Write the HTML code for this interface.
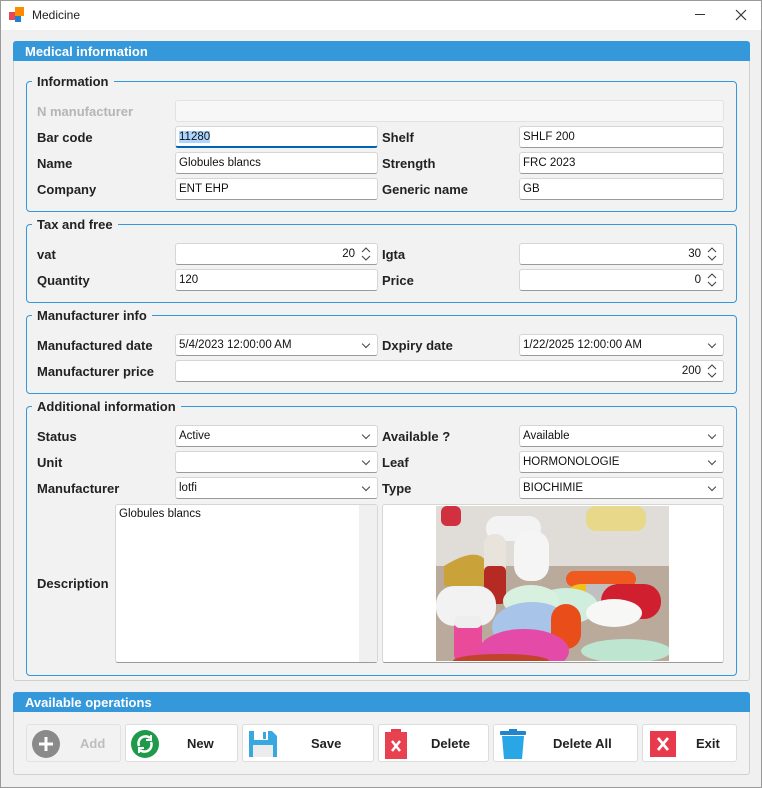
<!DOCTYPE html>
<html><head><meta charset="utf-8"><style>
*{box-sizing:border-box;margin:0;padding:0}
body{width:762px;height:788px;background:#f0f0f0;font-family:"Liberation Sans",sans-serif;position:relative;overflow:hidden}
.a{position:absolute}
.win{left:0;top:0;width:762px;height:788px;border:1px solid #9a9a9a}
.title{left:1px;top:1px;width:760px;height:29px;background:#fff}
.panel{background:#f2f2f2;border:1px solid #d0d0d0;border-radius:3px}
.hdr{background:#3498db;color:#fff;font-weight:bold;font-size:13px;padding:3px 0 0 12px;height:20px;border-radius:3px 3px 0 0}
.grp{border:1px solid #3498db;border-radius:4px}
.leg{background:#f2f2f2;font-weight:bold;font-size:13px;color:#222;padding:0 5px;top:-8px;left:5px;line-height:15px}
.lbl{font-weight:bold;font-size:13px;color:#222;line-height:24px}
.in{background:#fff;border:1px solid #d6d6d6;border-bottom:1px solid #9a9a9a;border-radius:3px;height:22px;font-size:11.5px;line-height:21px;padding-left:3px;color:#111}
.dd::after{content:"";position:absolute;right:8px;top:6px;width:5px;height:5px;border-right:1.2px solid #444;border-bottom:1.2px solid #444;transform:rotate(45deg)}
.btn{background:#fff;border:1px solid #ddd;border-radius:3px;height:38px;top:724px;font-weight:bold;font-size:13px;color:#222;line-height:38px}
</style></head><body>
<div class="a win"></div>
<div class="a title"></div>
<div class="a" style="left:9px;top:12px;width:6px;height:8px;background:#e84855"></div>
<div class="a" style="left:15px;top:7px;width:9px;height:9px;background:#ff8c00"></div>
<div class="a" style="left:15px;top:16px;width:6px;height:6px;background:#1e7fd8"></div>
<div class="a" style="left:32px;top:8px;font-size:12px;color:#222">Medicine</div>
<div class="a" style="left:695px;top:14px;width:10px;height:1px;background:#333"></div>
<svg class="a" style="left:735px;top:9px" width="12" height="12"><path d="M1 1L11 11M11 1L1 11" stroke="#333" stroke-width="1.2"/></svg>

<div class="a panel" style="left:13px;top:41px;width:737px;height:640px"></div>
<div class="a hdr" style="left:13px;top:41px;width:737px">Medical information</div>

<div class="a grp" style="left:26px;top:81px;width:711px;height:131px"><div class="a leg">Information</div></div>
<div class="a lbl" style="left:37px;top:100px;color:#b5b5b5">N manufacturer</div>
<div class="a in" style="left:175px;top:100px;width:549px;background:#f7f7f7;border-color:#e2e2e2"></div>
<div class="a lbl" style="left:37px;top:126px">Bar code</div>
<div class="a in" style="left:175px;top:126px;width:203px;border-bottom:2px solid #0063b1"><span style="background:#add6ff">11280</span></div>
<div class="a lbl" style="left:382px;top:126px">Shelf</div>
<div class="a in" style="left:519px;top:126px;width:205px">SHLF 200</div>
<div class="a lbl" style="left:37px;top:152px">Name</div>
<div class="a in" style="left:175px;top:152px;width:203px">Globules blancs</div>
<div class="a lbl" style="left:382px;top:152px">Strength</div>
<div class="a in" style="left:519px;top:152px;width:205px">FRC 2023</div>
<div class="a lbl" style="left:37px;top:178px">Company</div>
<div class="a in" style="left:175px;top:178px;width:203px">ENT EHP</div>
<div class="a lbl" style="left:382px;top:178px">Generic name</div>
<div class="a in" style="left:519px;top:178px;width:205px">GB</div>

<div class="a grp" style="left:26px;top:224px;width:711px;height:79px"><div class="a leg">Tax and free</div></div>
<div class="a lbl" style="left:37px;top:243px">vat</div>
<div class="a in" style="left:175px;top:243px;width:203px;text-align:right;padding-right:22px">20</div>
<div class="a lbl" style="left:382px;top:243px">Igta</div>
<div class="a in" style="left:519px;top:243px;width:205px;text-align:right;padding-right:22px">30</div>
<div class="a lbl" style="left:37px;top:269px">Quantity</div>
<div class="a in" style="left:175px;top:269px;width:203px">120</div>
<div class="a lbl" style="left:382px;top:269px">Price</div>
<div class="a in" style="left:519px;top:269px;width:205px;text-align:right;padding-right:22px">0</div>

<div class="a grp" style="left:26px;top:315px;width:711px;height:79px"><div class="a leg">Manufacturer info</div></div>
<div class="a lbl" style="left:37px;top:334px">Manufactured date</div>
<div class="a in dd" style="left:175px;top:334px;width:203px">5/4/2023 12:00:00 AM</div>
<div class="a lbl" style="left:382px;top:334px">Dxpiry date</div>
<div class="a in dd" style="left:519px;top:334px;width:205px">1/22/2025 12:00:00 AM</div>
<div class="a lbl" style="left:37px;top:360px">Manufacturer price</div>
<div class="a in" style="left:175px;top:360px;width:549px;text-align:right;padding-right:22px">200</div>

<svg class="a" style="left:0;top:0" width="762" height="788">
<g fill="none" stroke="#444" stroke-width="1.1">
<path d="M362 252l4-4 4 4M362 256l4 4 4-4"/>
<path d="M708 252l4-4 4 4M708 256l4 4 4-4"/>
<path d="M708 278l4-4 4 4M708 282l4 4 4-4"/>
<path d="M708 369l4-4 4 4M708 373l4 4 4-4"/>
</g></svg>

<div class="a grp" style="left:26px;top:406px;width:711px;height:270px"><div class="a leg">Additional information</div></div>
<div class="a lbl" style="left:37px;top:425px">Status</div>
<div class="a in dd" style="left:175px;top:425px;width:203px">Active</div>
<div class="a lbl" style="left:382px;top:425px">Available ?</div>
<div class="a in dd" style="left:519px;top:425px;width:205px">Available</div>
<div class="a lbl" style="left:37px;top:451px">Unit</div>
<div class="a in dd" style="left:175px;top:451px;width:203px"></div>
<div class="a lbl" style="left:382px;top:451px">Leaf</div>
<div class="a in dd" style="left:519px;top:451px;width:205px">HORMONOLOGIE</div>
<div class="a lbl" style="left:37px;top:477px">Manufacturer</div>
<div class="a in dd" style="left:175px;top:477px;width:203px">lotfi</div>
<div class="a lbl" style="left:382px;top:477px">Type</div>
<div class="a in dd" style="left:519px;top:477px;width:205px">BIOCHIMIE</div>
<div class="a lbl" style="left:37px;top:572px">Description</div>
<div class="a in" style="left:115px;top:504px;width:263px;height:159px;line-height:18px">Globules blancs<div class="a" style="right:0;top:0;width:18px;height:157px;background:#f0f0f0"></div></div>
<div class="a in" style="left:382px;top:504px;width:342px;height:159px"></div>
<svg class="a" style="left:436px;top:506px" width="233" height="155">
<rect width="233" height="155" fill="#b9aa9c"/>
<rect width="233" height="60" fill="#e0dcd8"/>
<rect x="150" y="0" width="60" height="25" rx="10" fill="#e8d98a"/>
<rect x="5" y="0" width="20" height="20" rx="6" fill="#d03040"/>
<rect x="50" y="10" width="55" height="25" rx="12" fill="#f3f3f3"/>
<rect x="78" y="25" width="35" height="50" rx="15" fill="#f5f5f5"/>
<path d="M8 60 Q40 40 50 55 L55 80 L8 80Z" fill="#c9a33a"/>
<rect x="48" y="28" width="22" height="70" rx="10" fill="#e8e4dc"/>
<rect x="48" y="60" width="22" height="38" rx="5" fill="#b52a22"/>
<rect x="0" y="80" width="60" height="40" rx="18" fill="#f2f2f2"/>
<rect x="130" y="65" width="70" height="16" rx="8" fill="#ee5a20"/>
<rect x="128" y="78" width="58" height="35" rx="17" fill="#f0c020"/>
<rect x="150" y="78" width="30" height="35" fill="#c0c0c0"/>
<rect x="165" y="78" width="60" height="35" rx="17" fill="#d02030"/>
<ellipse cx="130" cy="100" rx="32" ry="18" fill="#cfeede"/>
<ellipse cx="95" cy="95" rx="28" ry="16" fill="#d8f0e0"/>
<ellipse cx="178" cy="107" rx="28" ry="14" fill="#f7f7f5"/>
<ellipse cx="96" cy="121" rx="40" ry="25" fill="#a8c4e8"/>
<rect x="115" y="98" width="30" height="45" rx="15" fill="#e94e1a"/>
<rect x="18" y="110" width="28" height="50" rx="12" fill="#e94a9a"/>
<rect x="18" y="110" width="28" height="12" rx="6" fill="#eee"/>
<ellipse cx="88" cy="145" rx="45" ry="22" fill="#e44aa8"/>
<ellipse cx="190" cy="145" rx="45" ry="12" fill="#bde5cf"/>
<ellipse cx="65" cy="155" rx="48" ry="7" fill="#c0432a"/>
</svg>

<div class="a panel" style="left:13px;top:692px;width:737px;height:83px"></div>
<div class="a hdr" style="left:13px;top:692px;width:737px">Available operations</div>
<div class="a btn" style="left:26px;width:95px;background:#f2f2f2;border-color:#e2e2e2;color:#bdbdbd"><svg class="a" style="left:5px;top:5px" width="28" height="28"><circle cx="14" cy="14" r="14" fill="#8a8a8a"/><path d="M14 7v14M7 14h14" stroke="#fff" stroke-width="3"/></svg><span class="a" style="left:53px">Add</span></div>
<div class="a btn" style="left:125px;width:113px"><svg class="a" style="left:5px;top:5px" width="28" height="28"><circle cx="14" cy="14" r="14" fill="#1f9a4a"/><path d="M8 16a7 7 0 0 1 11-8M20 12a7 7 0 0 1-11 8" stroke="#fff" stroke-width="2.5" fill="none"/><path d="M20 5v5h-5M8 23v-5h5" stroke="#fff" stroke-width="2" fill="none"/></svg><span class="a" style="left:61px">New</span></div>
<div class="a btn" style="left:242px;width:132px"><svg class="a" style="left:6px;top:6px" width="28" height="26"><path d="M0 0h23l5 5v21H0z" fill="#3aa8e0"/><rect x="5" y="0" width="14" height="9" fill="#fff"/><rect x="14" y="1" width="3" height="7" fill="#3aa8e0"/><rect x="4" y="14" width="20" height="12" fill="#ececec"/></svg><span class="a" style="left:68px">Save</span></div>
<div class="a btn" style="left:378px;width:111px"><svg class="a" style="left:6px;top:4px" width="22" height="30"><rect x="6" y="0" width="10" height="3" fill="#e0404f"/><rect x="0" y="3" width="22" height="27" fill="#e8414f"/><path d="M7 12l8 10M15 12l-8 10" stroke="#fff" stroke-width="2.5"/></svg><span class="a" style="left:52px">Delete</span></div>
<div class="a btn" style="left:493px;width:145px"><svg class="a" style="left:6px;top:4px" width="26" height="30"><rect x="0" y="2" width="26" height="4" rx="1" fill="#1e86d0"/><rect x="9" y="0" width="8" height="3" fill="#1e86d0"/><path d="M2 7h22l-2 23H4z" fill="#29a6e6"/></svg><span class="a" style="left:59px">Delete All</span></div>
<div class="a btn" style="left:642px;width:95px"><svg class="a" style="left:7px;top:6px" width="26" height="26"><rect width="26" height="26" fill="#e83a4c"/><path d="M8 7l10 12M18 7L8 19" stroke="#fff" stroke-width="2.8"/></svg><span class="a" style="left:53px">Exit</span></div>
</body></html>
